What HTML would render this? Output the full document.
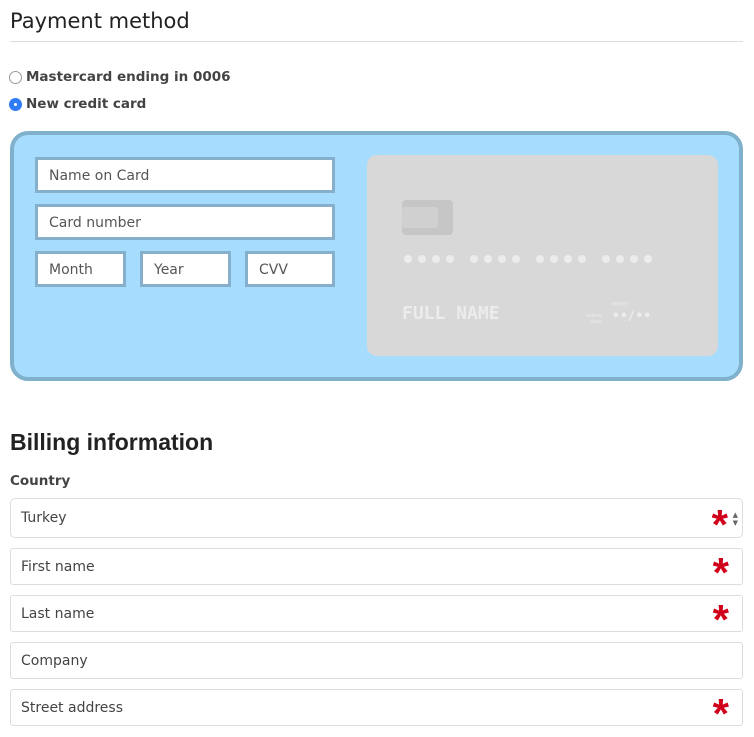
<!DOCTYPE html>
<html><head><meta charset="utf-8"><style>
body{margin:0;background:#fff;font-family:"DejaVu Sans","Liberation Sans",sans-serif;color:#333;width:754px;height:732px;overflow:hidden;position:relative}
.a{position:absolute}
h1{position:absolute;left:10px;top:9px;margin:0;font-weight:normal;font-size:21px;color:#222}
.hr{left:10px;top:41px;width:733px;height:1px;background:#ddd}
.rad{font-size:13.5px;font-weight:bold;color:#444}
.rb{width:13px;height:13px;border-radius:50%;border:1px solid #999;background:#fff;box-sizing:border-box}
.box{left:10px;top:131px;width:733px;height:250px;box-sizing:border-box;border:4px solid #7fb0cc;border-radius:18px;background:#a6dcfd}
.in{box-sizing:border-box;border:3px solid #86afcc;background:#fff;height:36px;font-size:14px;color:#555;padding:8px 0 0 11px}
.card{left:367px;top:155px;width:351px;height:201px;background:#d8d8d8;border-radius:10px}
.f{left:10px;width:733px;box-sizing:border-box;border:1px solid #ddd;border-radius:3px;height:37px;font-size:14px;color:#444;padding:10px 0 0 10px}
.st{position:absolute;right:13px;top:4px;color:#d0021b;font-size:42px;font-weight:bold;line-height:40px;font-family:"Liberation Sans",sans-serif}
.dots{position:absolute;top:255px;display:flex;gap:6px}
.dots i{width:8px;height:8px;border-radius:50%;background:#ececec}
</style></head><body>
<h1>Payment method</h1>
<div class="a hr"></div>
<div class="a rb" style="left:9px;top:71px"></div>
<div class="a rad" style="left:26px;top:69px">Mastercard ending in 0006</div>
<div class="a rb" style="left:9px;top:98px;background:#2f7cf6;border-color:#2f7cf6"><div style="width:3px;height:3px;background:#fff;border-radius:50%;margin:4px 0 0 4px"></div></div>
<div class="a rad" style="left:26px;top:96px">New credit card</div>
<div class="a box"></div>
<div class="a in" style="left:35px;top:157px;width:300px">Name on Card</div>
<div class="a in" style="left:35px;top:204px;width:300px">Card number</div>
<div class="a in" style="left:35px;top:251px;width:91px">Month</div>
<div class="a in" style="left:140px;top:251px;width:91px">Year</div>
<div class="a in" style="left:245px;top:251px;width:90px">CVV</div>
<div class="a card"></div>
<div class="a" style="left:402px;top:200px;width:51px;height:35px;background:#c6c6c6;border-radius:4px"></div>
<div class="a" style="left:402px;top:207px;width:36px;height:21px;background:#d0d0d0;border-radius:3px"></div>
<div class="dots" style="left:404px"><i></i><i></i><i></i><i></i></div>
<div class="dots" style="left:470px"><i></i><i></i><i></i><i></i></div>
<div class="dots" style="left:536px"><i></i><i></i><i></i><i></i></div>
<div class="dots" style="left:602px"><i></i><i></i><i></i><i></i></div>
<div class="a" style="left:402px;top:303px;font-size:18px;color:#ececec;font-weight:bold;font-family:'DejaVu Sans Mono',monospace">FULL NAME</div>
<div class="a" style="left:586px;top:313px;font-size:5px;color:#ececec;line-height:6px;text-align:right">expire<br>date</div>
<div class="a" style="left:612px;top:302px;font-size:5px;color:#ececec">MM/YY</div>
<div class="a" style="left:612px;top:309px;font-size:13px;color:#ececec;font-weight:bold;font-family:'DejaVu Sans Mono',monospace">••/••</div>
<div class="a" style="left:10px;top:429px;font-size:23px;font-weight:bold;color:#222;font-family:'Liberation Sans',sans-serif">Billing information</div>
<div class="a" style="left:10px;top:473px;font-size:13.5px;font-weight:bold;color:#444">Country</div>
<div class="a f" style="top:498px;height:40px;border-radius:5px;padding-top:11px">Turkey<span class="st" style="right:14px;top:6px">*</span><span style="position:absolute;right:4px;top:12px;font-size:7px;color:#666;line-height:8px">▲<br>▼</span></div>
<div class="a f" style="top:548px">First name<span class="st">*</span></div>
<div class="a f" style="top:595px">Last name<span class="st">*</span></div>
<div class="a f" style="top:642px">Company</div>
<div class="a f" style="top:689px">Street address<span class="st">*</span></div>
</body></html>
